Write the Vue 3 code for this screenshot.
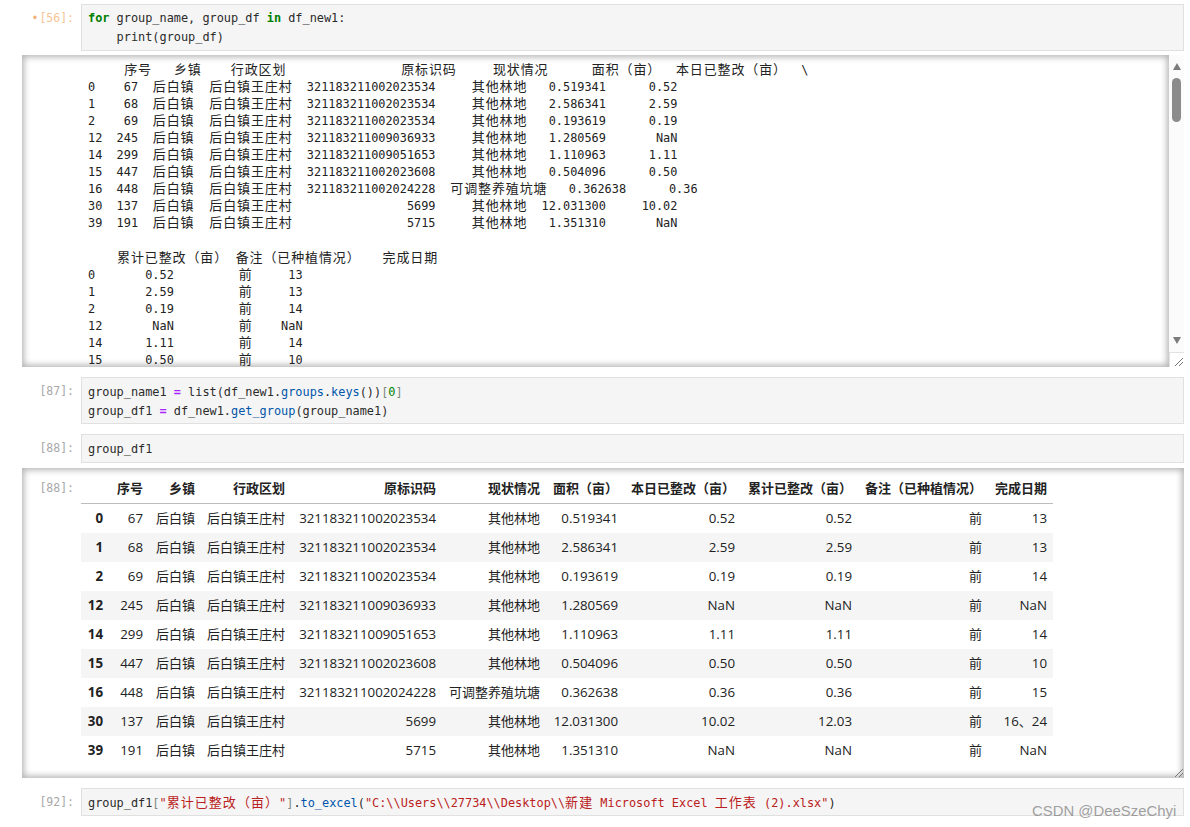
<script setup>
const seg = (str) => {
  const parts = str.match(/[\u3000-\u9fff\uff00-\uffef]+|[^\u3000-\u9fff\uff00-\uffef]+/g) || []
  return parts.map((t) => ({ t, c: /[\u3000-\u9fff\uff00-\uffef]/.test(t) }))
}

const outLines = [
  '     序号   乡镇    行政区划                原标识码     现状情况      面积（亩）  本日已整改（亩）  \\',
  '0    67  后白镇  后白镇王庄村  321183211002023534     其他林地   0.519341      0.52',
  '1    68  后白镇  后白镇王庄村  321183211002023534     其他林地   2.586341      2.59',
  '2    69  后白镇  后白镇王庄村  321183211002023534     其他林地   0.193619      0.19',
  '12  245  后白镇  后白镇王庄村  321183211009036933     其他林地   1.280569       NaN',
  '14  299  后白镇  后白镇王庄村  321183211009051653     其他林地   1.110963      1.11',
  '15  447  后白镇  后白镇王庄村  321183211002023608     其他林地   0.504096      0.50',
  '16  448  后白镇  后白镇王庄村  321183211002024228  可调整养殖坑塘   0.362638      0.36',
  '30  137  后白镇  后白镇王庄村                5699     其他林地  12.031300     10.02',
  '39  191  后白镇  后白镇王庄村                5715     其他林地   1.351310       NaN',
  ' ',
  '    累计已整改（亩） 备注（已种植情况）   完成日期',
  '0       0.52         前     13',
  '1       2.59         前     13',
  '2       0.19         前     14',
  '12       NaN         前    NaN',
  '14      1.11         前     14',
  '15      0.50         前     10',
]

const cols = [28, 40, 52, 90, 151, 104, 78, 117, 117, 130, 65]
const heads = ['', '序号', '乡镇', '行政区划', '原标识码', '现状情况', '面积（亩）', '本日已整改（亩）', '累计已整改（亩）', '备注（已种植情况）', '完成日期']
const v = '后白镇'
const w = '后白镇王庄村'
const rows = [
  ['0', '67', v, w, '321183211002023534', '其他林地', '0.519341', '0.52', '0.52', '前', '13'],
  ['1', '68', v, w, '321183211002023534', '其他林地', '2.586341', '2.59', '2.59', '前', '13'],
  ['2', '69', v, w, '321183211002023534', '其他林地', '0.193619', '0.19', '0.19', '前', '14'],
  ['12', '245', v, w, '321183211009036933', '其他林地', '1.280569', 'NaN', 'NaN', '前', 'NaN'],
  ['14', '299', v, w, '321183211009051653', '其他林地', '1.110963', '1.11', '1.11', '前', '14'],
  ['15', '447', v, w, '321183211002023608', '其他林地', '0.504096', '0.50', '0.50', '前', '10'],
  ['16', '448', v, w, '321183211002024228', '可调整养殖坑塘', '0.362638', '0.36', '0.36', '前', '15'],
  ['30', '137', v, w, '5699', '其他林地', '12.031300', '10.02', '12.03', '前', '16、24'],
  ['39', '191', v, w, '5715', '其他林地', '1.351310', 'NaN', 'NaN', '前', 'NaN'],
]

const code56 = [
  [['for', 'kw'], [' group_name, group_df ', ''], ['in', 'kw'], [' df_new1:', '']],
  [['    print(group_df)', '']],
]
const code87 = [
  [['group_name1 ', ''], ['=', 'op'], [' list(df_new1.', ''], ['groups', 'prop'], ['.', ''], ['keys', 'prop'], ['())', ''], ['[', 'br'], ['0', 'num'], [']', 'br']],
  [['group_df1 ', ''], ['=', 'op'], [' df_new1.', ''], ['get_group', 'prop'], ['(group_name1)', '']],
]
const code88 = [[['group_df1', '']]]
const code92 = [
  [['group_df1', ''], ['[', 'br'], ['"累计已整改（亩）"', 'str'], [']', 'br'], ['.', ''], ['to_excel', 'prop'], ['(', ''], ['"C:\\\\Users\\\\27734\\\\Desktop\\\\新建 Microsoft Excel 工作表 (2).xlsx"', 'str'], [')', '']],
]
</script>

<template>
  <div class="nb">
    <div class="cell">
      <div class="prompt dirty"><span class="dot">•</span>[56]:</div>
      <div class="editor">
        <div v-for="(ln, i) in code56" :key="i" class="cl">
          <span v-for="(tk, j) in ln" :key="j" :class="tk[1]"><span v-for="(s, k) in seg(tk[0])" :key="k" :class="{ cj: s.c }">{{ s.t }}</span></span>
        </div>
      </div>
    </div>

    <div class="output scrolled">
      <div class="stream">
        <div v-for="(ln, i) in outLines" :key="i" class="ol">
          <span v-for="(s, k) in seg(ln)" :key="k" :class="{ cjo: s.c }">{{ s.t }}</span>
        </div>
      </div>
      <div class="scrollbar">
        <span class="arrow up"></span>
        <span class="thumb"></span>
        <span class="fill"></span>
        <span class="arrow down"></span>
        <span class="corner">
          <svg width="14" height="14" viewBox="0 0 14 14"><path d="M5 13 L13 5 M9 13 L13 9" stroke="#777" stroke-width="1" fill="none" /></svg>
        </span>
      </div>
    </div>

    <div class="cell gap">
      <div class="prompt">[87]:</div>
      <div class="editor low">
        <div v-for="(ln, i) in code87" :key="i" class="cl">
          <span v-for="(tk, j) in ln" :key="j" :class="tk[1]">{{ tk[0] }}</span>
        </div>
      </div>
    </div>

    <div class="cell gap">
      <div class="prompt">[88]:</div>
      <div class="editor low">
        <div v-for="(ln, i) in code88" :key="i" class="cl">
          <span v-for="(tk, j) in ln" :key="j">{{ tk[0] }}</span>
        </div>
      </div>
    </div>

    <div class="output table-out">
      <div class="prompt out-prompt">[88]:</div>
      <table class="df">
        <colgroup>
          <col v-for="(c, i) in cols" :key="i" :style="{ width: c + 'px' }" />
        </colgroup>
        <thead>
          <tr>
            <th v-for="(h, i) in heads" :key="i"><span v-for="(s, k) in seg(h)" :key="k" :class="{ cjt: s.c }">{{ s.t }}</span></th>
          </tr>
        </thead>
        <tbody>
          <tr v-for="r in rows" :key="r[0]">
            <td v-for="(val, i) in r" :key="i" :class="{ idx: i === 0 }"><span v-for="(s, k) in seg(val)" :key="k" :class="{ cjt: s.c }">{{ s.t }}</span></td>
          </tr>
        </tbody>
      </table>
      <svg class="grip" width="14" height="14" viewBox="0 0 14 14"><path d="M5 13 L13 5 M9 13 L13 9" stroke="#777" stroke-width="1" fill="none" /></svg>
    </div>

    <div class="cell gap">
      <div class="prompt">[92]:</div>
      <div class="editor low">
        <div v-for="(ln, i) in code92" :key="i" class="cl">
          <span v-for="(tk, j) in ln" :key="j" :class="tk[1]"><span v-for="(s, k) in seg(tk[0])" :key="k" :class="{ cj: s.c }">{{ s.t }}</span></span>
        </div>
      </div>
    </div>

    <div class="mark">CSDN @DeeSzeChyi</div>
  </div>
</template>

<style scoped>
.nb {
  position: relative;
  box-sizing: border-box;
  width: 1190px;
  height: 827px;
  padding: 4px 6px 0 22px;
  overflow: hidden;
  background: #fff;
  color: #222;
  font-family: "DejaVu Sans Mono", "Noto Sans CJK SC", monospace;
  font-size: 11.88px;
}
.cell {
  display: grid;
  grid-template-columns: 59px 1fr;
}
.gap {
  margin-top: 10px;
}
.prompt {
  box-sizing: border-box;
  padding: 5px 7px 0 0;
  text-align: right;
  color: #a8a8a8;
  font-size: 11.5px;
  line-height: 18.5px;
  white-space: pre;
}
.dirty {
  color: #f5c596;
}
.dot {
  color: #f2b277;
  margin-right: 1px;
}
.editor {
  box-sizing: border-box;
  padding: 4px 6px;
  min-height: 28.5px;
  border: 1px solid #e0e0e0;
  background: #f5f5f5;
}
.low {
  padding-top: 5px;
  padding-bottom: 3px;
}
.cl {
  height: 18.5px;
  line-height: 18.5px;
  white-space: pre;
  color: #2b2b2b;
}
.cj {
  font-family: "Noto Sans CJK SC", sans-serif;
  font-size: 13px;
  letter-spacing: 1.05px;
  line-height: 1;
}
.kw {
  color: #008000;
  font-weight: 700;
}
.op {
  color: #aa22ff;
  font-weight: 700;
}
.prop {
  color: #0055aa;
}
.br {
  color: #7f8a7f;
}
.num {
  color: #008000;
}
.str {
  color: #ba2121;
}

.output {
  position: relative;
  margin-top: 5px;
  width: 1162px;
}
.scrolled {
  display: flex;
  height: 312px;
  margin-top: 4px;
}
.stream {
  flex: 1;
  min-width: 0;
  box-sizing: border-box;
  padding: 7px 0 0 66px;
  overflow: hidden;
  box-shadow: inset 0 0 6px 2px rgba(0, 0, 0, 0.3);
}
.ol {
  height: 17.05px;
  line-height: 17px;
  white-space: pre;
}
.cjo {
  font-family: "Noto Sans CJK SC", sans-serif;
  font-size: 13px;
  letter-spacing: 0.87px;
  padding-left: 0.5px;
  line-height: 1;
}
.scrollbar {
  width: 15px;
  display: flex;
  flex-direction: column;
  align-items: center;
  background: #fbfbfb;
}
.arrow {
  width: 0;
  height: 0;
  border-left: 4.5px solid transparent;
  border-right: 4.5px solid transparent;
}
.up {
  margin-top: 8px;
  border-bottom: 7px solid #7b7b7b;
}
.thumb {
  width: 9px;
  height: 44px;
  margin-top: 8px;
  border-radius: 5px;
  background: #8b8b8b;
}
.fill {
  flex: 1;
}
.down {
  border-top: 7px solid #7b7b7b;
  margin-bottom: 8px;
}
.corner {
  box-sizing: border-box;
  width: 15px;
  height: 15px;
  display: block;
  border-top: 1px solid #e2e2e2;
  border-left: 1px solid #e2e2e2;
  background: #fff;
}
.corner svg {
  display: block;
}

.table-out {
  display: block;
  box-sizing: border-box;
  height: 310px;
  padding: 5px 0 0 59px;
  box-shadow: inset 0 0 6px 2px rgba(0, 0, 0, 0.3);
}
.out-prompt {
  position: absolute;
  left: 0;
  top: 6px;
  width: 59px;
}
.grip {
  position: absolute;
  right: 0;
  bottom: 0;
}
.df {
  table-layout: fixed;
  width: 972px;
  border-collapse: collapse;
  border-spacing: 0;
  font-family: "Open Sans", "Noto Sans CJK SC", sans-serif;
  font-size: 13.3px;
  color: #222;
}
.df th,
.df td {
  box-sizing: border-box;
  padding: 0 6px;
  text-align: right;
  white-space: nowrap;
  font-weight: 400;
}
.df th {
  height: 31px;
  font-weight: 700;
  border-bottom: 1px solid #bdbdbd;
}
.df td {
  height: 29px;
}
.df td.idx {
  font-weight: 700;
}
.df tbody tr:nth-child(even) {
  background: #f5f5f5;
}
.cjt {
  font-family: "Noto Sans CJK SC", sans-serif;
  font-size: 13px;
  line-height: 1;
}
.mark {
  position: absolute;
  left: 1032px;
  top: 802px;
  font-family: "Liberation Sans", Arial, sans-serif;
  font-size: 14.9px;
  line-height: 18px;
  color: rgba(130, 130, 130, 0.75);
  white-space: nowrap;
}
</style>
<style>
html, body { margin: 0; background: #fff; }
</style>
